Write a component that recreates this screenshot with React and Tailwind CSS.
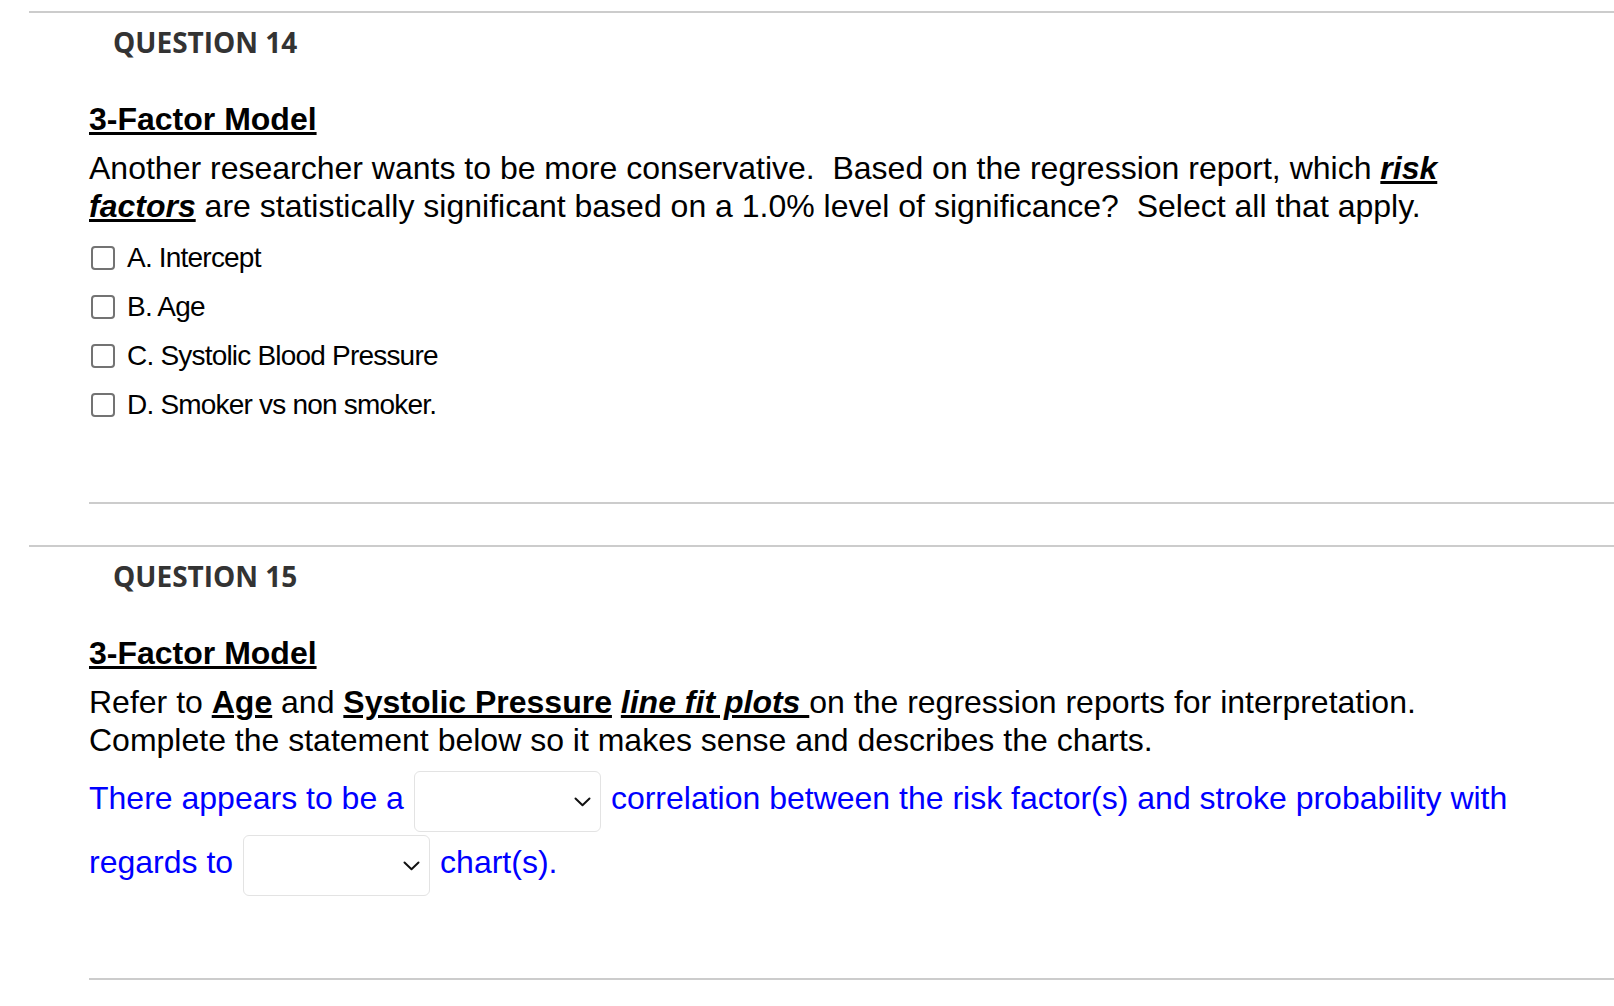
import React from 'react';

const CheckOption = ({ letter, label }) => (
  <div className="h-[49px] flex items-center">
    <span className="w-[24px] h-[24px] ml-[2px] border-2 border-[#737373] rounded-[4px] bg-white shrink-0" />
    <span className="ml-[12px] text-[28px] leading-[49px] tracking-[-0.8px] text-black">
      {letter}. {label}
    </span>
  </div>
);

const Dropdown = () => (
  <div className="w-[187px] h-[61px] shrink-0 border-[1.5px] border-[#e3e3e3] rounded-[6px] bg-white flex items-center justify-end pr-[9px]">
    <svg width="17" height="10" viewBox="0 0 17 10" fill="none">
      <path d="M1.5 1.5 L8.5 8.2 L15.5 1.5" stroke="#111" strokeWidth="2" strokeLinecap="round" strokeLinejoin="round" />
    </svg>
  </div>
);

const QuestionHeader = ({ number }) => (
  <h2 className="pl-[84px] mt-[9px] h-[40px] text-[28px] leading-[40px] font-bold text-[#333333] font-['Open_Sans',sans-serif]">
    QUESTION {number}
  </h2>
);

const ModelTitle = () => (
  <h3 className="mt-[39px] text-[32px] leading-[36px] font-bold underline text-black">3-Factor Model</h3>
);

export default function App() {
  return (
    <div className="min-h-screen bg-white font-['Liberation_Sans',Arial,sans-serif] pt-[11px] pb-[26px]">
      {/* Question 14 */}
      <div className="ml-[29px] border-t-2 border-[#cccccc]">
        <QuestionHeader number={14} />
        <div className="pl-[60px]">
          <ModelTitle />
          <p className="mt-[12px] text-[32px] leading-[38px] text-black">
            Another researcher wants to be more conservative.&nbsp; Based on the regression report, which{' '}
            <b className="italic underline">risk</b>
            <br />
            <b className="italic underline">factors</b> are statistically significant based on a 1.0% level of
            significance?&nbsp; Select all that apply.
          </p>
          <div className="mt-[8px]">
            <CheckOption letter="A" label="Intercept" />
            <CheckOption letter="B" label="Age" />
            <CheckOption letter="C" label="Systolic Blood Pressure" />
            <CheckOption letter="D" label="Smoker vs non smoker." />
          </div>
          <div className="mt-[73px] border-t-2 border-[#cccccc]" />
        </div>
      </div>

      {/* Question 15 */}
      <div className="ml-[29px] mt-[41px] border-t-2 border-[#cccccc]">
        <QuestionHeader number={15} />
        <div className="pl-[60px]">
          <ModelTitle />
          <p className="mt-[12px] text-[32px] leading-[38px] text-black">
            Refer to <b className="underline">Age</b> and <b className="underline">Systolic Pressure</b>{' '}
            <b className="italic underline">line fit plots </b>on the regression reports for interpretation.
            <br />
            Complete the statement below so it makes sense and describes the charts.
          </p>
          <div className="mt-[12px] text-[32px] leading-[36px] text-[#0000ff]">
            <div className="flex items-start">
              <span className="pt-[9px] whitespace-nowrap">There appears to be a</span>
              <div className="ml-[10px]">
                <Dropdown />
              </div>
              <span className="pt-[9px] ml-[10px] whitespace-nowrap">
                correlation between the risk factor(s) and stroke probability with
              </span>
            </div>
            <div className="flex items-start mt-[3px]">
              <span className="pt-[9px] whitespace-nowrap">regards to</span>
              <div className="ml-[10px]">
                <Dropdown />
              </div>
              <span className="pt-[9px] ml-[10px] whitespace-nowrap">chart(s).</span>
            </div>
          </div>
          <div className="mt-[82px] border-t-2 border-[#cccccc]" />
        </div>
      </div>
    </div>
  );
}
